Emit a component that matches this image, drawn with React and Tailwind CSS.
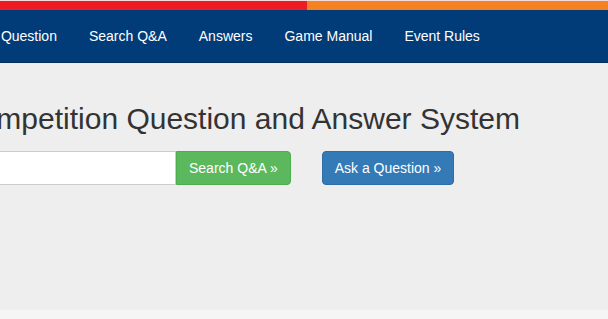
export default function App() {
  const navItems = ['Ask a Question', 'Search Q&A', 'Answers', 'Game Manual', 'Event Rules'];

  return (
    <div className="w-[608px] h-[319px] overflow-hidden bg-[#eeeeee] font-['Liberation_Sans',Arial,sans-serif] text-[14px] leading-[20px]">
      {/* colour stripe */}
      <div className="flex h-[10px] border-t border-[#f7dada]">
        <div className="w-[307px] bg-[#ed1c24]"></div>
        <div className="flex-1 bg-[#f58220]"></div>
      </div>

      {/* nav bar */}
      <nav className="h-[53px] bg-[#013b78] border-b border-[#022f60] flex items-center">
        <ul className="flex -ml-[54px]">
          {navItems.map((item) => (
            <li key={item} className="px-4 text-white whitespace-nowrap">
              {item}
            </li>
          ))}
        </ul>
      </nav>

      {/* jumbotron */}
      <div className="h-[247px] bg-[#eeeeee]">
        <h1 className="pt-[39px] -ml-[42px] text-[30px] leading-[33px] text-[#333333] whitespace-nowrap">
          Competition Question and Answer System
        </h1>
        <div className="mt-[16px] flex items-center">
          <div className="flex">
            <input
              type="text"
              className="w-[186px] -ml-[10px] h-[34px] bg-white border border-[#cccccc] rounded-l-[4px] px-3 outline-none"
            />
            <button className="h-[34px] px-3 bg-[#5cb85c] border border-[#4cae4c] text-white rounded-r-[4px] whitespace-nowrap">
              Search Q&amp;A »
            </button>
          </div>
          <button className="ml-[31px] h-[34px] px-3 bg-[#337ab7] border border-[#2e6da4] text-white rounded-[4px] whitespace-nowrap">
            Ask a Question »
          </button>
        </div>
      </div>
      <div className="h-[9px] bg-[#f5f5f5]"></div>
    </div>
  );
}
